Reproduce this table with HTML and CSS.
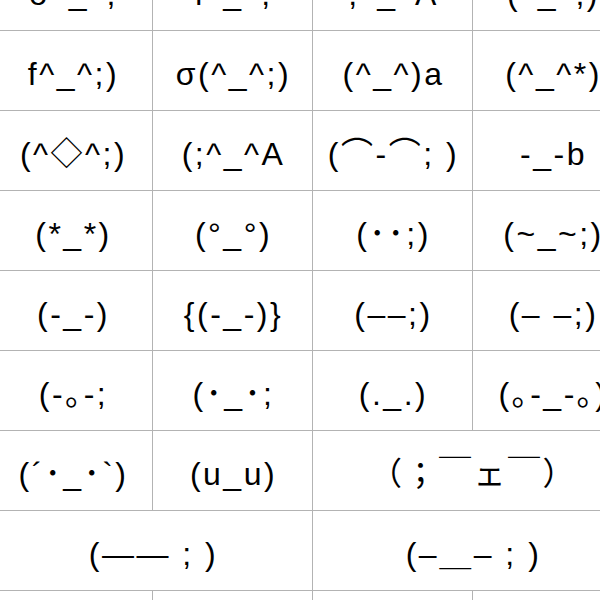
FILE: index.html
```html
<!DOCTYPE html>
<html lang="ja">
<head>
<meta charset="utf-8">
<title>顔文字</title>
<link rel="stylesheet" href="styles.css">
</head>
<body>
<div class="grid">
  <div class="cell">σ^_^;</div>
  <div class="cell">f^_^;</div>
  <div class="cell">;^_^A</div>
  <div class="cell">(^_^;)</div>

  <div class="cell">f^_^;)</div>
  <div class="cell">σ(^_^;)</div>
  <div class="cell">(^_^)a</div>
  <div class="cell">(^_^*)</div>

  <div class="cell">(^◇^;)</div>
  <div class="cell">(;^_^A</div>
  <div class="cell">(⌒-⌒; )</div>
  <div class="cell">-_-b</div>

  <div class="cell">(*_*)</div>
  <div class="cell">(°_°)</div>
  <div class="cell">(･･;)</div>
  <div class="cell">(~_~;)</div>

  <div class="cell">(-_-)</div>
  <div class="cell">{(-_-)}</div>
  <div class="cell">(––;)</div>
  <div class="cell">(– –;)</div>

  <div class="cell">(-｡-;</div>
  <div class="cell">(･_･;</div>
  <div class="cell">(._.)</div>
  <div class="cell">(｡-_-｡)</div>

  <div class="cell">(´･_･`)</div>
  <div class="cell">(u_u)</div>
  <div class="cell wide">（；￣ェ￣）</div>

  <div class="cell wide">(―― ; )</div>
  <div class="cell wide">(–＿– ; )</div>

  <div class="cell">(^_^)v</div>
  <div class="cell">(^^ゞ</div>
  <div class="cell">(^o^)</div>
  <div class="cell">(^_^)/</div>
</div>
</body>
</html>
```

FILE: styles.css
```css
html, body {
  margin: 0;
  padding: 0;
  width: 600px;
  height: 600px;
  overflow: hidden;
  background: #ffffff;
}

.grid {
  display: grid;
  grid-template-columns: repeat(4, 160px);
  grid-auto-rows: 80px;
  width: 640px;
  margin: -50px 0 0 -8px;
  font-family: "Liberation Sans", "Noto Sans CJK JP", sans-serif;
  font-size: 32px;
  line-height: 36px;
  letter-spacing: 2.5px;
  color: #000000;
}

.cell {
  box-sizing: border-box;
  border-top: 1px solid #b3b3b3;
  border-left: 1px solid #b3b3b3;
  display: flex;
  align-items: center;
  justify-content: center;
  padding-top: 7px;
  padding-left: 2px;
  white-space: nowrap;
}

.wide {
  grid-column: span 2;
}
```
